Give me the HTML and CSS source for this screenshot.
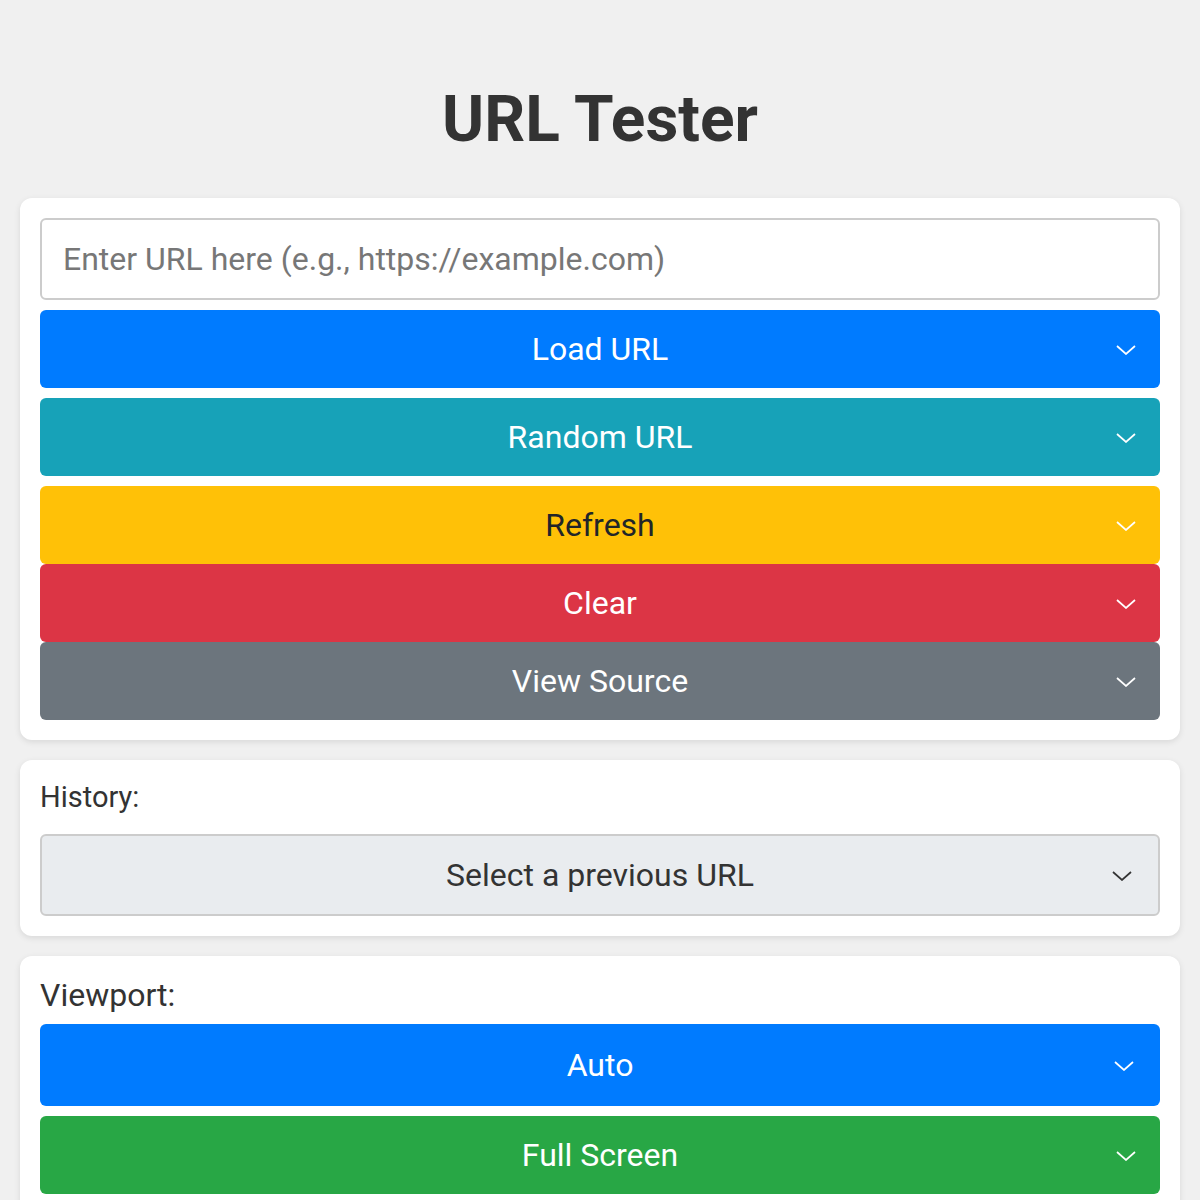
FILE: index.html
```html
<!DOCTYPE html>
<html lang="en">
<head>
<meta charset="utf-8">
<title>URL Tester</title>
<link rel="stylesheet" href="styles.css">
</head>
<body>
<h1 class="title">URL Tester</h1>

<section class="card">
  <input class="url-input" type="text" placeholder="Enter URL here (e.g., https://example.com)">
  <div class="btn btn-blue gap">Load URL<svg class="chev" viewBox="0 0 20 10"><path d="M1 1 L10 9 L19 1"/></svg></div>
  <div class="btn btn-teal gap">Random URL<svg class="chev" viewBox="0 0 20 10"><path d="M1 1 L10 9 L19 1"/></svg></div>
  <div class="btn btn-yellow gap">Refresh<svg class="chev" viewBox="0 0 20 10"><path d="M1 1 L10 9 L19 1"/></svg></div>
  <div class="btn btn-red">Clear<svg class="chev" viewBox="0 0 20 10"><path d="M1 1 L10 9 L19 1"/></svg></div>
  <div class="btn btn-gray">View Source<svg class="chev" viewBox="0 0 20 10"><path d="M1 1 L10 9 L19 1"/></svg></div>
</section>

<section class="card">
  <div class="label label-history">History:</div>
  <div class="select">Select a previous URL<svg class="chev chev-dark" viewBox="0 0 20 10"><path d="M1 1 L10 9 L19 1"/></svg></div>
</section>

<section class="card">
  <div class="label label-viewport">Viewport:</div>
  <div class="btn btn-blue btn-tall">Auto<svg class="chev chev-sel" viewBox="0 0 20 10"><path d="M1 1 L10 9 L19 1"/></svg></div>
  <div class="btn btn-green gap">Full Screen<svg class="chev" viewBox="0 0 20 10"><path d="M1 1 L10 9 L19 1"/></svg></div>
</section>
</body>
</html>
```

FILE: styles.css
```css
* { box-sizing: border-box; }

body {
  margin: 0;
  padding: 0 20px 20px;
  background: #f0f0f0;
  font-family: Roboto, "Liberation Sans", Arial, sans-serif;
  color: #333;
}

.title {
  margin: 0;
  padding: 82px 0 0;
  height: 198px;
  text-align: center;
  font-size: 64px;
  line-height: 75px;
  font-weight: 700;
  color: #333;
}

.card {
  background: #fff;
  border-radius: 12px;
  padding: 20px;
  margin-bottom: 20px;
  box-shadow: 0 2px 6px rgba(0, 0, 0, 0.1);
}

.url-input {
  display: block;
  width: 100%;
  height: 82px;
  padding: 0 21px;
  border: 2px solid #ccc;
  border-radius: 6px;
  font-family: inherit;
  font-size: 32px;
  color: #333;
  background: #fff;
  outline: none;
}
.url-input::placeholder { color: #777; }

.btn {
  position: relative;
  height: 78px;
  border-radius: 6px;
  display: flex;
  align-items: center;
  justify-content: center;
  font-size: 32px;
  color: #fff;
}
.gap { margin-top: 10px; }
.btn-tall { height: 82px; }

.btn-blue { background: #007bff; }
.btn-teal { background: #17a2b8; }
.btn-yellow { background: #ffc107; color: #212529; }
.btn-red { background: #dc3545; }
.btn-gray { background: #6c757d; }
.btn-green { background: #28a745; }

.chev {
  position: absolute;
  right: 24px;
  top: 50%;
  width: 20px;
  height: 10px;
  margin-top: -4px;
  fill: none;
  stroke: #fff;
  stroke-width: 1.7;
}
.chev-sel { right: 26px; }
.chev-dark { stroke: #333; right: 26px; }

.label {
  font-size: 29px;
  line-height: 34px;
  color: #333;
}
.label-history { margin-bottom: 20px; }
.label-viewport { font-size: 32px; line-height: 38px; margin-bottom: 10px; }

.select {
  position: relative;
  height: 82px;
  border: 2px solid #ccc;
  border-radius: 6px;
  background: #e9ecef;
  display: flex;
  align-items: center;
  justify-content: center;
  font-size: 32px;
  color: #333;
}
```
